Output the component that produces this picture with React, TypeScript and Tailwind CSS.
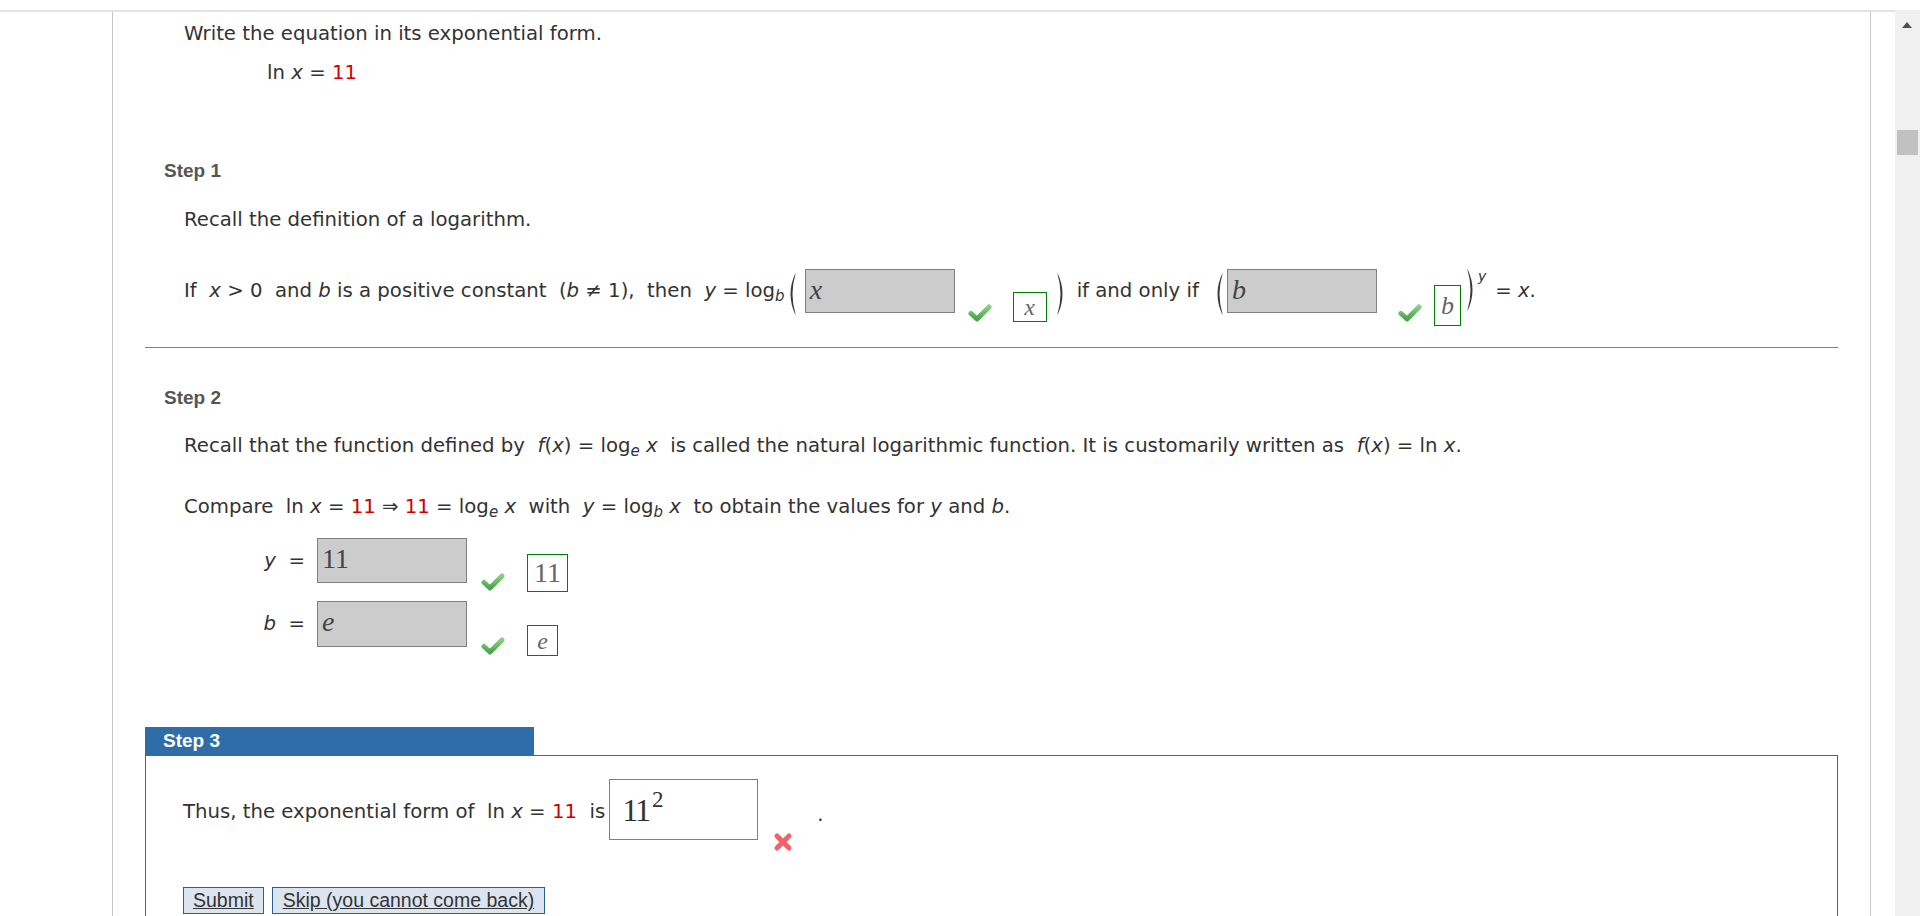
import React from "react";

const body = "font-['DejaVu_Sans',sans-serif] text-[19.7px] text-[#333]";
const label = "font-['Liberation_Sans',Arial,sans-serif] text-[19px] font-bold text-[#555] leading-[24px]";
const serif = "font-['Liberation_Serif','Times_New_Roman',serif]";

function Check({ className = "" }: { className?: string }) {
  return (
    <svg width="24" height="20" viewBox="0 0 24 20" className={className} aria-hidden="true">
      <defs>
        <linearGradient id="chk" x1="0" y1="0" x2="0" y2="1">
          <stop offset="0" stopColor="#86cf86" />
          <stop offset="1" stopColor="#4aa64a" />
        </linearGradient>
      </defs>
      <path d="M3 10.5 L9 16 L21 4" fill="none" stroke="url(#chk)" strokeWidth="5" strokeLinecap="round" strokeLinejoin="round" />
    </svg>
  );
}

function Cross({ className = "" }: { className?: string }) {
  return (
    <svg width="20" height="20" viewBox="0 0 20 20" className={className} aria-hidden="true">
      <path d="M4 4 L16 16 M16 4 L4 16" stroke="#f2626b" strokeWidth="5" strokeLinecap="round" />
    </svg>
  );
}

function I({ children }: { children: React.ReactNode }) {
  return <span className="italic">{children}</span>;
}

function Red({ children }: { children: React.ReactNode }) {
  return <span className="text-[#d00000]">{children}</span>;
}

// tall bracket, as the math renderer draws it
function Paren({ right = false, className = "" }: { right?: boolean; className?: string }) {
  return (
    <svg width="11" height="44" viewBox="0 0 11 44" className={className} aria-hidden="true">
      <path
        d={
          right
            ? "M1.5 1 Q11.5 22 1.5 43 L1.5 42 Q7.5 22 1.5 2 Z"
            : "M9.5 1 Q-0.5 22 9.5 43 L9.5 42 Q3.5 22 9.5 2 Z"
        }
        fill="#3a3a3a"
      />
    </svg>
  );
}

function GrayInput({ children, h = "h-[44px]" }: { children: React.ReactNode; h?: string }) {
  return (
    <div className={`w-[150px] ${h} shrink-0 border border-[#808080] bg-[#cccccc] pl-[4px] pt-[4px] ${serif} text-[28px] leading-[32px] text-[#444]`}>
      {children}
    </div>
  );
}

function GreenBox({ children, className }: { children: React.ReactNode; className: string }) {
  return (
    <div className={`flex shrink-0 items-center justify-center border border-[#008000] ${serif} text-[#666] ${className}`}>
      {children}
    </div>
  );
}

export default function App() {
  return (
    <div className={`flex h-[916px] w-[1920px] flex-col overflow-hidden bg-white ${body}`}>
      <div className="h-[10px] shrink-0" />
      <div className="flex min-h-0 flex-1">
        <div className="flex flex-1 flex-col border-t-2 border-[#e3e3e3]">
          <div className="flex flex-1">
            <div className="w-[112px] shrink-0" />
            <div className="w-[1759px] shrink-0 border-x border-[#c8c8c8]">
              {/* question */}
              <p className="mt-[10px] pl-[71px] leading-[24px]">Write the equation in its exponential form.</p>
              <p className="mt-[15px] pl-[154px] leading-[24px]">
                ln <I>x</I> = <Red>11</Red>
              </p>

              {/* step 1 */}
              <div className={`mt-[74px] pl-[51px] ${label}`}>Step 1</div>
              <p className="mt-[25px] pl-[71px] leading-[24px]">Recall the definition of a logarithm.</p>
              <div className="mt-[37px] flex h-[60px] items-start pl-[71px]">
                <span className="h-[44px] whitespace-pre leading-[44px]">
                  If  <I>x</I> &gt; 0  and <I>b</I> is a positive constant  (<I>b</I> ≠ 1),  then  <I>y</I> = log
                  <sub className="text-[15px] italic">b</sub>
                </span>
                <Paren className="ml-[1px] mt-[3px]" />
                <span className="ml-[8px]">
                  <GrayInput><I>x</I></GrayInput>
                </span>
                <Check className="ml-[13px] mt-[34px]" />
                <GreenBox className="ml-[21px] mt-[23px] h-[30px] w-[34px] text-[24px] italic">x</GreenBox>
                <Paren right className="ml-[9px] mt-[3px]" />
                <span className="ml-[10px] h-[44px] leading-[44px]">if and only if</span>
                <Paren className="ml-[14px] mt-[3px]" />
                <span className="ml-[3px]">
                  <GrayInput><I>b</I></GrayInput>
                </span>
                <Check className="ml-[21px] mt-[34px]" />
                <GreenBox className="ml-[12px] mt-[16px] h-[41px] w-[27px] text-[26px] italic">b</GreenBox>
                <Paren right className="ml-[5px] mt-[-1px]" />
                <span className="ml-[1px] mt-[-3px] text-[14px] italic leading-[20px]">y</span>
                <span className="ml-[9px] h-[44px] whitespace-pre leading-[44px]">= <I>x</I>.</span>
              </div>
              <div className="mx-[32px] mt-[18px] h-px bg-[#7f7f7f]" />

              {/* step 2 */}
              <div className={`mt-[38px] pl-[51px] ${label}`}>Step 2</div>
              <p className="mt-[24px] whitespace-pre pl-[71px] leading-[24px]">
                Recall that the function defined by  <I>f</I>(<I>x</I>) = log<sub className="text-[15px] italic">e</sub> <I>x</I>  is called the natural logarithmic function. It is customarily written as  <I>f</I>(<I>x</I>) = ln <I>x</I>.
              </p>
              <p className="mt-[37px] whitespace-pre pl-[71px] leading-[24px]">
                Compare  ln <I>x</I> = <Red>11</Red> ⇒ <Red>11</Red> = log<sub className="text-[15px] italic">e</sub> <I>x</I>  with  <I>y</I> = log<sub className="text-[15px] italic">b</sub> <I>x</I>  to obtain the values for <I>y</I> and <I>b</I>.
              </p>
              <div className="mt-[19px] flex h-[55px] items-start pl-[142px]">
                <span className="h-[45px] w-[50px] whitespace-pre text-right leading-[45px]"><I>y</I>  =</span>
                <span className="ml-[12px]">
                  <GrayInput h="h-[45px]">11</GrayInput>
                </span>
                <Check className="ml-[14px] mt-[34px]" />
                <GreenBox className="ml-[22px] mt-[16px] h-[38px] w-[41px] text-[28px]">11</GreenBox>
              </div>
              <div className="mt-[8px] flex h-[55px] items-start pl-[142px]">
                <span className="h-[46px] w-[50px] whitespace-pre text-right leading-[46px]"><I>b</I>  =</span>
                <span className="ml-[12px]">
                  <GrayInput h="h-[46px]"><I>e</I></GrayInput>
                </span>
                <Check className="ml-[14px] mt-[35px]" />
                <GreenBox className="ml-[22px] mt-[24px] h-[31px] w-[31px] text-[24px] italic">e</GreenBox>
              </div>

              {/* step 3 */}
              <div className="mx-[32px] mt-[71px]">
                <div className="flex h-[28px] w-[389px] items-center bg-[#2e6da8] pl-[18px] font-['Liberation_Sans',Arial,sans-serif] text-[19px] font-bold text-white">
                  Step 3
                </div>
                <div className="h-[200px] border border-[#2e6da8] pl-[37px]">
                  <div className="mt-[23px] flex h-[61px] items-start">
                    <span className="mt-[21px] whitespace-pre leading-[24px]">
                      Thus, the exponential form of  ln <I>x</I> = <Red>11</Red>  is
                    </span>
                    <div className={`ml-[4px] flex h-[61px] w-[149px] shrink-0 items-start border border-[#808080] bg-white pl-[12px] pt-[12px] ${serif} text-[#333]`}>
                      <span className="text-[32px] leading-[36px] tracking-[-2px]">11</span>
                      <span className="ml-[3px] -mt-[6px] text-[23px] leading-[28px]">2</span>
                    </div>
                    <Cross className="ml-[15px] mt-[53px]" />
                    <span className="ml-[24px] mt-[24px] leading-[24px]">.</span>
                  </div>
                  <div className="mt-[47px] flex gap-[8px] font-['Liberation_Sans',Arial,sans-serif] text-[19.5px] text-[#333]">
                    <button className="h-[27px] border border-[#2f5f90] bg-[#dbe5f0] px-[9px] leading-[25px] underline">Submit</button>
                    <button className="h-[27px] border border-[#2f5f90] bg-[#dbe5f0] px-[10px] leading-[25px] underline">Skip (you cannot come back)</button>
                  </div>
                </div>
              </div>
            </div>
          </div>
        </div>
        <div className="w-[25px] shrink-0 bg-[#f0f0f0]">
          <div className="ml-[7px] mt-[12px] h-0 w-0 border-x-[5px] border-b-[6px] border-x-transparent border-b-[#505050]" />
          <div className="ml-[2px] mt-[102px] h-[25px] w-[21px] bg-[#c1c1c1]" />
        </div>
      </div>
    </div>
  );
}
